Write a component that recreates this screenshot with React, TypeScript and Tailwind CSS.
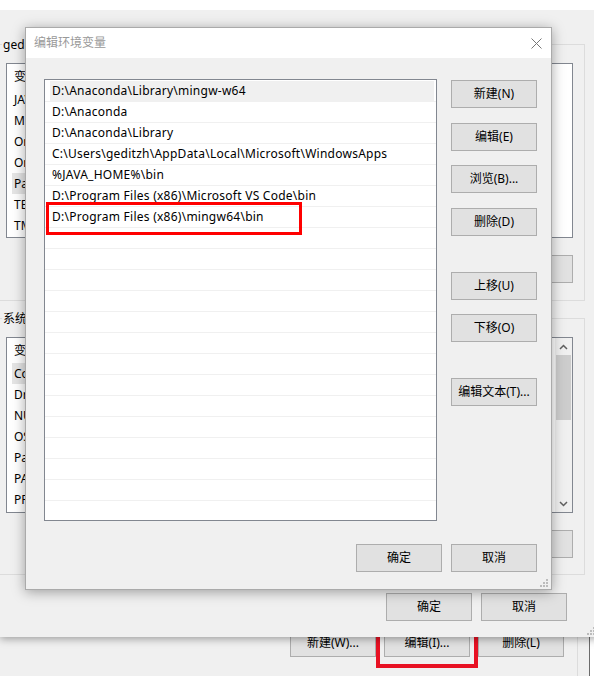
import React from "react";
import clsx from "clsx";

const pathRows = [
  "D:\\Anaconda\\Library\\mingw-w64",
  "D:\\Anaconda",
  "D:\\Anaconda\\Library",
  "C:\\Users\\geditzh\\AppData\\Local\\Microsoft\\WindowsApps",
  "%JAVA_HOME%\\bin",
  "D:\\Program Files (x86)\\Microsoft VS Code\\bin",
  "D:\\Program Files (x86)\\mingw64\\bin",
  ...Array(14).fill(""),
];

const userVars = ["JAVA_HOME", "MOZ_PLUGIN_PATH", "OneDrive", "OneDriveConsumer", "Path", "TEMP", "TMP"];
const sysVars = ["ComSpec", "DriverData", "NUMBER_OF_PROCESSORS", "OS", "Path", "PATHEXT", "PROCESSOR_ARCHITECTURE"];

interface BtnProps {
  children: React.ReactNode;
  className?: string;
}
const Btn: React.FC<BtnProps> = ({ children, className }) => (
  <div
    className={clsx(
      "flex h-[28px] w-[86px] shrink-0 items-center justify-center border border-[#adadad] bg-[#e1e1e1] leading-none text-black",
      className
    )}
  >
    {children}
  </div>
);

const Grip: React.FC<{ className?: string }> = ({ className }) => {
  const dots = [
    [6, 0],
    [3, 3],
    [6, 3],
    [0, 6],
    [3, 6],
    [6, 6],
  ];
  return (
    <svg width="8" height="8" viewBox="0 0 8 8" className={className}>
      {dots.map(([x, y]) => (
        <rect key={`${x}-${y}`} x={x} y={y} width="2" height="2" fill="#bcbcbc" />
      ))}
    </svg>
  );
};

const Caret: React.FC<{ down?: boolean }> = ({ down }) => (
  <svg width="9" height="6" viewBox="0 0 9 6">
    <polyline
      points={down ? "1,1 4.5,4.5 8,1" : "1,5 4.5,1.5 8,5"}
      fill="none"
      stroke="#606060"
      strokeWidth="1.5"
    />
  </svg>
);

// background list of the 环境变量 window
const VarList: React.FC<{ rows: string[]; highlight: number; tall?: boolean; scroll?: boolean }> = ({
  rows,
  highlight,
  tall,
  scroll,
}) => (
  <div
    className={clsx(
      "ml-[9px] flex w-[567px] overflow-hidden border border-[#828790] bg-white",
      tall ? "h-[176px]" : "h-[175px]"
    )}
  >
    <div className="flex-1">
      <div className="flex h-[25px] items-center pl-[7px]">
        <span className="w-[160px]">变量</span>
        <span>值</span>
      </div>
      {rows.map((r, i) => (
        <div key={r} className="h-[21px] pl-[5px]">
          <div className={clsx("flex h-full w-[140px] items-center pl-[2px]", i === highlight && "bg-[#e5e5e5]")}>
            {r}
          </div>
        </div>
      ))}
    </div>
    {scroll && (
      <div className="flex w-[17px] flex-col bg-[#f0f0f0]">
        <div className="flex h-[17px] items-center justify-center">
          <Caret />
        </div>
        <div className="mx-[1px] h-[65px] bg-[#cdcdcd]" />
        <div className="flex-1" />
        <div className="flex h-[17px] items-center justify-center">
          <Caret down />
        </div>
      </div>
    )}
  </div>
);

const GroupBox: React.FC<{ label: string; className?: string; children: React.ReactNode }> = ({
  label,
  className,
  children,
}) => (
  <div className={clsx("ml-[-4px] h-[257px] w-[589px] border border-[#dcdcdc]", className)}>
    <div className="-mt-[8px] ml-[5px] w-fit bg-[#f0f0f0] px-[1px] leading-[16px]">{label}</div>
    {children}
  </div>
);

export default function App() {
  return (
    <div className="relative h-[676px] w-[594px] overflow-hidden bg-white font-['Noto_Sans','Noto_Sans_CJK_SC',sans-serif] text-[12px] text-black">
      {/* 系统属性 window, mostly hidden */}
      <div className="absolute left-0 top-[590px] h-[86px] w-[590px] border-r border-[#6b6b6b] bg-[#f0f0f0]">
        <div className="h-[85px] w-[578px] border-b border-r border-[#dcdcdc]">
          <div className="mt-[39px] flex justify-end gap-[8px] pr-[13px]">
            <Btn>新建(W)...</Btn>
            <Btn>编辑(I)...</Btn>
            <Btn>删除(L)</Btn>
          </div>
        </div>
        <div className="absolute left-[376px] top-[30px] h-[48px] w-[102px] border-[4px] border-[#e81123]" />
      </div>

      {/* 环境变量 window */}
      <div className="absolute left-0 top-0 flex h-[637px] w-[600px] flex-col shadow-[0_2px_8px_rgba(0,0,0,0.35)]">
        <div className="h-[10px] bg-white" />
        <div className="relative flex-1 bg-[#f0f0f0]">
          <GroupBox label="geditzh 的用户变量(U)" className="mt-[34px]">
            <div className="mt-[10px]">
              <VarList rows={userVars} highlight={4} />
            </div>
            <div className="ml-[9px] mt-[17px] flex w-[567px] justify-end gap-[8px]">
              <Btn>新建(N)...</Btn>
              <Btn>编辑(E)...</Btn>
              <Btn>删除(D)</Btn>
            </div>
          </GroupBox>
          <GroupBox label="系统变量(S)" className="mt-[17px]">
            <div className="mt-[10px]">
              <VarList rows={sysVars} highlight={0} tall scroll />
            </div>
            <div className="ml-[9px] mt-[17px] flex w-[567px] justify-end gap-[8px]">
              <Btn>新建(W)...</Btn>
              <Btn>编辑(I)...</Btn>
              <Btn>删除(L)</Btn>
            </div>
          </GroupBox>
          <div className="mt-[18px] flex justify-end gap-[9px] pr-[33px]">
            <Btn>确定</Btn>
            <Btn>取消</Btn>
          </div>
          <Grip className="absolute bottom-[2px] right-[5px]" />
        </div>
      </div>

      {/* 编辑环境变量 dialog */}
      <div className="absolute left-[25px] top-[27px] flex h-[563px] w-[527px] flex-col border border-[#aaaaaa] bg-[#f0f0f0] shadow-[0_2px_12px_rgba(0,0,0,0.35)]">
        <div className="flex h-[30px] shrink-0 items-center justify-between bg-white">
          <span className="pl-[8px] text-[#999999]">编辑环境变量</span>
          <div className="flex h-full w-[30px] items-center justify-center">
            <svg width="11" height="11" viewBox="0 0 11 11">
              <path d="M0.5 0.5L10.5 10.5M10.5 0.5L0.5 10.5" stroke="#777777" strokeWidth="1" />
            </svg>
          </div>
        </div>
        <div className="relative flex flex-1 flex-col pl-[18px] pr-[14px] pt-[21px]">
          <div className="flex gap-[14px]">
            <div className="relative h-[442px] w-[393px] shrink-0 overflow-hidden border border-[#828790] bg-white pt-[1px]">
              {pathRows.map((p, i) => (
                <div key={i} className="h-[21px] border-b border-[#f0f0f0] pl-[5px] pr-[2px]">
                  <div
                    className={clsx(
                      "flex h-full items-center whitespace-nowrap pl-[2px] tracking-[0.25px]",
                      i === 0 && "bg-[#f0f0f0]"
                    )}
                  >
                    {p}
                  </div>
                </div>
              ))}
              <div className="absolute left-[1px] top-[122px] h-[33px] w-[256px] border-[3px] border-[#ff0000]" />
            </div>
            <div className="flex flex-col pt-[1px]">
              <Btn>新建(N)</Btn>
              <Btn className="mt-[15px]">编辑(E)</Btn>
              <Btn className="mt-[14px]">浏览(B)...</Btn>
              <Btn className="mt-[15px]">删除(D)</Btn>
              <Btn className="mt-[36px]">上移(U)</Btn>
              <Btn className="mt-[14px]">下移(O)</Btn>
              <Btn className="mt-[36px]">编辑文本(T)...</Btn>
            </div>
          </div>
          <div className="mt-[23px] flex justify-end gap-[9px]">
            <Btn>确定</Btn>
            <Btn>取消</Btn>
          </div>
          <Grip className="absolute bottom-[2px] right-[3px]" />
        </div>
      </div>
    </div>
  );
}
